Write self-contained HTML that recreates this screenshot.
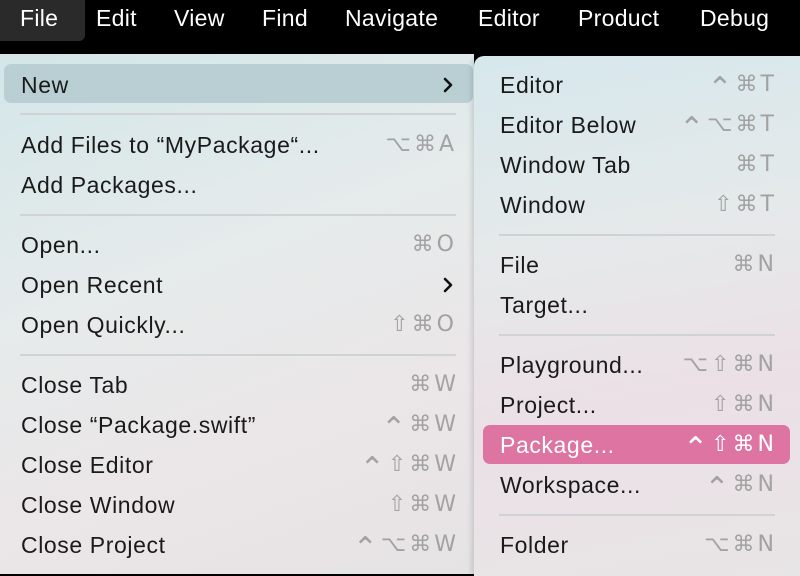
<!DOCTYPE html>
<html><head><style>
body{margin:0;width:800px;height:570px;overflow:hidden;background:#000;font-family:"Liberation Sans","DejaVu Sans",sans-serif;position:relative}
.bar{position:absolute;left:0;top:0;width:800px;height:54px;background:#000}
.bar span{position:absolute;top:5px;color:#fff;font-size:23px;letter-spacing:0.3px}
.fhl{position:absolute;left:0;top:0;width:85px;height:41px;background:#2a2a2a;border-radius:0 0 6px 0}
.m1{position:absolute;left:0;top:54px;width:474px;height:520px;background:linear-gradient(160deg,#d3e6e9 0%,#e6ebeb 40%,#ebe6e8 70%,#e6e3e4 100%)}
.m2{position:absolute;left:474px;top:56px;width:326px;height:520px;border-radius:10px 0 0 0;background:linear-gradient(170deg,#d6e8ec 0%,#e5e9ea 35%,#ebe0e6 65%,#e8e5e6 100%);box-shadow:-2px 0 6px rgba(0,0,0,.15)}
.r{position:absolute;font-size:23px;color:#1a1a1a;line-height:26px;letter-spacing:0.6px;white-space:nowrap}
.k{position:absolute;font-size:22px;color:#a2a2a2;line-height:26px;text-align:right;letter-spacing:3px;font-family:"DejaVu Sans",sans-serif;white-space:nowrap}
.k b{font-weight:normal;font-size:30px;vertical-align:-7px;line-height:20px}
.sep{position:absolute;height:2px;background:#cfd3d4}
.chev{position:absolute;width:12px;height:18px}
</style></head><body>
<div class="bar"><div class="fhl"></div>
<span style="left:20px">File</span><span style="left:96px">Edit</span><span style="left:174px">View</span><span style="left:262px">Find</span><span style="left:345px">Navigate</span><span style="left:478px">Editor</span><span style="left:578px">Product</span><span style="left:700px">Debug</span></div>
<div class="m1">
<div style="position:absolute;left:4px;top:10px;width:469px;height:39px;background:#b9cfd4;border-radius:7px"></div>
</div>
<div class="m2">
<div style="position:absolute;left:9px;top:369px;width:307px;height:39px;background:#dd74a2;border-radius:7px"></div>
</div>
<div class="r" style="left:21px;top:72px">New</div>
<svg class="chev" style="left:442px;top:76px" viewBox="0 0 12 18"><path d="M3 3 L9 9 L3 15" stroke="#111" stroke-width="2.6" fill="none" stroke-linecap="round" stroke-linejoin="round"/></svg>
<div class="sep" style="left:20px;top:113px;width:436px"></div>
<div class="r" style="left:21px;top:132px">Add Files to “MyPackage“...</div><div class="k" style="right:343px;top:132px">⌥⌘A</div>
<div class="r" style="left:21px;top:172px">Add Packages...</div>
<div class="sep" style="left:20px;top:214px;width:436px"></div>
<div class="r" style="left:21px;top:232px">Open...</div><div class="k" style="right:343px;top:232px">⌘O</div>
<div class="r" style="left:21px;top:272px">Open Recent</div>
<svg class="chev" style="left:442px;top:276px" viewBox="0 0 12 18"><path d="M3 3 L9 9 L3 15" stroke="#111" stroke-width="2.6" fill="none" stroke-linecap="round" stroke-linejoin="round"/></svg>
<div class="r" style="left:21px;top:312px">Open Quickly...</div><div class="k" style="right:343px;top:312px">⇧⌘O</div>
<div class="sep" style="left:20px;top:354px;width:436px"></div>
<div class="r" style="left:21px;top:372px">Close Tab</div><div class="k" style="right:341px;top:372px">⌘W</div>
<div class="r" style="left:21px;top:412px">Close “Package.swift”</div><div class="k" style="right:341px;top:412px"><b>⌃</b>⌘W</div>
<div class="r" style="left:21px;top:452px">Close Editor</div><div class="k" style="right:341px;top:452px"><b>⌃</b>⇧⌘W</div>
<div class="r" style="left:21px;top:492px">Close Window</div><div class="k" style="right:341px;top:492px">⇧⌘W</div>
<div class="r" style="left:21px;top:532px">Close Project</div><div class="k" style="right:341px;top:532px"><b>⌃</b>⌥⌘W</div>

<div class="r" style="left:500px;top:72px">Editor</div><div class="k" style="right:23px;top:72px"><b>⌃</b>⌘T</div>
<div class="r" style="left:500px;top:112px">Editor Below</div><div class="k" style="right:23px;top:112px"><b>⌃</b>⌥⌘T</div>
<div class="r" style="left:500px;top:152px">Window Tab</div><div class="k" style="right:23px;top:152px">⌘T</div>
<div class="r" style="left:500px;top:192px">Window</div><div class="k" style="right:23px;top:192px">⇧⌘T</div>
<div class="sep" style="left:499px;top:234px;width:276px"></div>
<div class="r" style="left:500px;top:252px">File</div><div class="k" style="right:23px;top:252px">⌘N</div>
<div class="r" style="left:500px;top:292px">Target...</div>
<div class="sep" style="left:499px;top:334px;width:276px"></div>
<div class="r" style="left:500px;top:352px">Playground...</div><div class="k" style="right:23px;top:352px">⌥⇧⌘N</div>
<div class="r" style="left:500px;top:392px">Project...</div><div class="k" style="right:23px;top:392px">⇧⌘N</div>
<div class="r" style="left:500px;top:432px;color:#fff">Package...</div><div class="k" style="right:23px;top:432px;color:#fff"><b>⌃</b>⇧⌘N</div>
<div class="r" style="left:500px;top:472px">Workspace...</div><div class="k" style="right:23px;top:472px"><b>⌃</b>⌘N</div>
<div class="sep" style="left:499px;top:514px;width:276px"></div>
<div class="r" style="left:500px;top:532px">Folder</div><div class="k" style="right:23px;top:532px">⌥⌘N</div>
</body></html>
